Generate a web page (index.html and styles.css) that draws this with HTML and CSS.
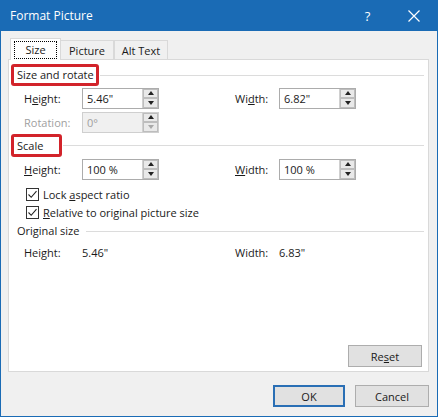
FILE: index.html
```html
<!DOCTYPE html>
<html>
<head>
<meta charset="utf-8">
<link rel="stylesheet" href="styles.css">
</head>
<body>
<div class="window">
  <div class="titlebar">
    <span class="title">Format Picture</span>
    <span class="tb-btn help">?</span>
    <span class="tb-btn close">
      <svg width="12" height="12" viewBox="0 0 12 12"><path d="M0.5 0.5 L11.5 11.5 M11.5 0.5 L0.5 11.5" stroke="#fff" stroke-width="1.2" fill="none"/></svg>
    </span>
  </div>
  <div class="body">
    <div class="tabs">
      <div class="tab active"><span class="focus">Size</span></div>
      <div class="tab t2">Picture</div>
      <div class="tab t3">Alt Text</div>
    </div>
    <div class="panel">
      <div class="group g1">
        <span class="ghead boxed">Size and rotate</span>
        <span class="gline"></span>
      </div>
      <div class="row">
        <div class="field">
          <span class="label">H<u>e</u>ight:</span>
          <div class="spin"><span class="val">5.46"</span><span class="arrows"><span class="up"></span><span class="dn"></span></span></div>
        </div>
        <div class="field">
          <span class="label lw">Wi<u>d</u>th:</span>
          <div class="spin"><span class="val">6.82"</span><span class="arrows"><span class="up"></span><span class="dn"></span></span></div>
        </div>
      </div>
      <div class="row">
        <div class="field">
          <span class="label dis">Rotation:</span>
          <div class="spin disabled"><span class="val">0°</span><span class="arrows"><span class="up"></span><span class="dn"></span></span></div>
        </div>
      </div>
      <div class="group scale">
        <span class="ghead boxed">Scale</span>
        <span class="gline"></span>
      </div>
      <div class="row">
        <div class="field">
          <span class="label"><u>H</u>eight:</span>
          <div class="spin"><span class="val">100 %</span><span class="arrows"><span class="up"></span><span class="dn"></span></span></div>
        </div>
        <div class="field">
          <span class="label lw"><u>W</u>idth:</span>
          <div class="spin"><span class="val">100 %</span><span class="arrows"><span class="up"></span><span class="dn"></span></span></div>
        </div>
      </div>
      <div class="checks">
        <label class="check"><span class="box"><svg width="11" height="11" viewBox="0 0 11 11"><path d="M1.5 5.5 L4.2 8.3 L9.5 2.2" stroke="#222" stroke-width="1.1" fill="none"/></svg></span><span>Lock <u>a</u>spect ratio</span></label>
        <label class="check"><span class="box"><svg width="11" height="11" viewBox="0 0 11 11"><path d="M1.5 5.5 L4.2 8.3 L9.5 2.2" stroke="#222" stroke-width="1.1" fill="none"/></svg></span><span><u>R</u>elative to original picture size</span></label>
      </div>
      <div class="group orig">
        <span class="ghead">Original size</span>
        <span class="gline"></span>
      </div>
      <div class="row info">
        <div class="field">
          <span class="label">Height:</span>
          <span class="ival">5.46"</span>
        </div>
        <div class="field">
          <span class="label lw">Width:</span>
          <span class="ival">6.83"</span>
        </div>
      </div>
      <div class="spacer"></div>
      <div class="reset-row">
        <button class="btn">Re<u>s</u>et</button>
      </div>
    </div>
    <div class="footer">
      <button class="btn ok">OK</button>
      <button class="btn">Cancel</button>
    </div>
  </div>
</div>
</body>
</html>
```

FILE: styles.css
```css
* { box-sizing: border-box; }
html, body { margin: 0; padding: 0; }
body {
  width: 438px;
  height: 417px;
  font-family: "Open Sans", "Noto Sans", sans-serif;
  font-size: 11px;
  color: #1a1a1a;
  background: #fff;
}
.window {
  width: 438px;
  height: 417px;
  border: 1px solid #1a6bb5;
  border-top: none;
  display: flex;
  flex-direction: column;
  background: #f0f0f0;
}
.titlebar {
  height: 31px;
  background: #1a6bb5;
  color: #fff;
  display: flex;
  align-items: center;
  padding-left: 9px;
  flex-shrink: 0;
}
.title { font-size: 12px; flex: 1; }
.tb-btn {
  width: 45px;
  display: flex;
  justify-content: center;
  align-items: center;
}
.help { font-size: 13px; margin-right: 1px; }
.close { width: 46px; }
.body {
  flex: 1;
  display: flex;
  flex-direction: column;
  padding: 7px 8px 9px 7px;
}
.tabs {
  display: flex;
  align-items: flex-end;
  height: 21px;
  padding-left: 2px;
  position: relative;
  z-index: 1;
}
.tab {
  height: 19px;
  border: 1px solid #d9d9d9;
  border-bottom: none;
  background: #f0f0f0;
  display: flex;
  align-items: center;
  justify-content: center;
}
.tab.active {
  height: 22px;
  margin-bottom: -1px;
  background: #fff;
  padding: 0 3px;
  width: 51px;
  z-index: 2;
}
.t2 { width: 53px; border-left: none; }
.t3 { width: 54px; border-left: 1px solid #d9d9d9; }
.focus {
  border: 1px dotted #000;
  line-height: 16px;
  display: block;
  width: 100%;
  text-align: center;
}
.panel {
  flex: 1;
  background: #fff;
  border: 1px solid #d9d9d9;
  display: flex;
  flex-direction: column;
  padding: 4px 4px 4px 2px;
}
.group {
  display: flex;
  align-items: center;
  height: 22px;
  flex-shrink: 0;
}
.ghead {
  padding: 0 6px;
  line-height: 18px;
  white-space: nowrap;
}
.boxed {
  border: 3px solid #d2232a;
  border-radius: 3px;
  padding: 0 3px;
  display: flex;
  align-items: center;
  flex-shrink: 0;
}
.g1 .boxed { width: 88px; height: 22px; }
.scale .boxed { width: 51px; height: 23px; }
.gline {
  flex: 1;
  height: 1px;
  background: #dcdcdc;
  margin-left: 1px;
}
.row {
  display: flex;
  height: 24px;
  align-items: center;
  padding-left: 13px;
  flex-shrink: 0;
}
.field {
  display: flex;
  align-items: center;
  width: 211px;
  flex-shrink: 0;
}
.label { width: 58px; }
.label.lw { width: 44px; }
.dis { color: #a0a0a0; }
.spin {
  width: 77px;
  height: 21px;
  border: 1px solid #acacac;
  display: flex;
  background: #fff;
}
.spin .val {
  flex: 1;
  padding-left: 4px;
  line-height: 19px;
}
.spin.disabled { background: #f0f0f0; border-color: #cfcfcf; }
.spin.disabled .val { color: #a0a0a0; }
.arrows {
  width: 16px;
  display: flex;
  flex-direction: column;
  border-left: 1px solid #d0d0d0;
}
.arrows span {
  flex: 1;
  background: #e9e9e9;
  border: 1px solid #bdbdbd;
  display: flex;
  justify-content: center;
  align-items: center;
}
.arrows .up { border-bottom-width: 0.5px; }
.arrows .up::after {
  content: "";
  border-left: 3.5px solid transparent;
  border-right: 3.5px solid transparent;
  border-bottom: 4px solid #222;
}
.arrows .dn::after {
  content: "";
  border-left: 3.5px solid transparent;
  border-right: 3.5px solid transparent;
  border-top: 4px solid #222;
}
.disabled .arrows .dn::after { border-top-color: #a8a8a8; }
.scale { height: 23px; }
.checks {
  display: flex;
  flex-direction: column;
  padding-left: 15px;
  margin-top: 4px;
  flex-shrink: 0;
}
.check {
  display: flex;
  align-items: center;
  height: 18px;
}
.box {
  width: 13px;
  height: 13px;
  border: 1px solid #333;
  margin-right: 4px;
  display: flex;
  justify-content: center;
  align-items: center;
  background: #fff;
}
.orig { height: 20px; }
.info { height: 22px; }
.spacer { flex: 1; }
.reset-row {
  display: flex;
  justify-content: flex-end;
  padding-right: 2px;
}
.btn {
  font: inherit;
  color: #1a1a1a;
  width: 74px;
  height: 22px;
  background: #e1e1e1;
  border: 1px solid #adadad;
  padding: 0;
  margin: 0;
}
.footer {
  display: flex;
  justify-content: flex-end;
  gap: 10px;
  padding-top: 13px;
}
.btn.ok {
  border: 2px solid #2a6fb5;
  width: 72px;
}
```
